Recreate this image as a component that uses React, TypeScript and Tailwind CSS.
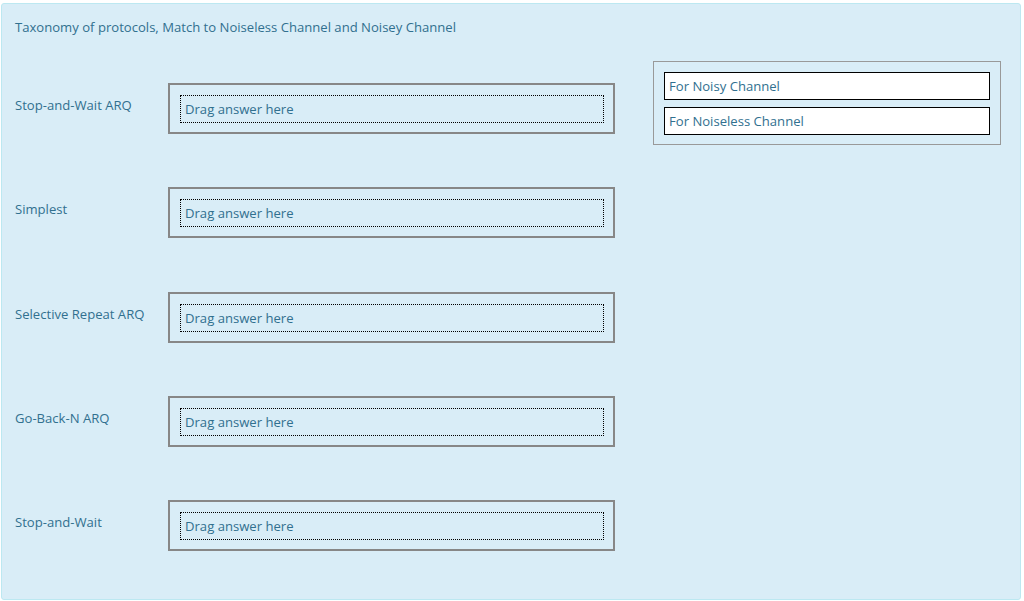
import React from 'react';

const protocols = [
  'Stop-and-Wait ARQ',
  'Simplest',
  'Selective Repeat ARQ',
  'Go-Back-N ARQ',
  'Stop-and-Wait',
];

const answers = ['For Noisy Channel', 'For Noiseless Channel'];

const DropZone: React.FC = () => (
  <div className="w-[447px] h-[51px] border-2 border-[#878787] pl-[10px] pr-[9px] pt-[10px]">
    <div className="h-[28px] border border-dotted border-black pl-[4px] flex items-center">
      <span className="leading-[18px]">Drag answer here</span>
    </div>
  </div>
);

export default function App() {
  return (
    <div className="w-[1024px] h-[601px] bg-white pt-[3px] pl-[1px] pr-[3px] font-['Open_Sans',sans-serif] text-[13.1px] text-[#31708f]">
      <div className="h-[597px] bg-[#d9edf7] border border-[#bce8f1] rounded-[3px] pl-[13px] pr-[19px] pt-[14px]">
        <div className="leading-[18px]">
          Taxonomy of protocols, Match to Noiseless Channel and Noisey Channel
        </div>

        <div className="flex items-start justify-between mt-[25px]">
          {/* question rows */}
          <div className="flex flex-col gap-[53.25px] pt-[22px]">
            {protocols.map((label, i) => (
              <div key={i} className="flex items-start">
                <div className="w-[153px] mt-[13px] leading-[18px]">{label}</div>
                <DropZone />
              </div>
            ))}
          </div>

          {/* answer pool */}
          <div className="w-[348px] border border-[#999999] px-[10px] pt-[10px] pb-[9px] flex flex-col gap-[7px]">
            {answers.map((a) => (
              <div
                key={a}
                className="h-[28px] bg-white border border-black pl-[4px] flex items-center leading-[18px]"
              >
                {a}
              </div>
            ))}
          </div>
        </div>
      </div>
    </div>
  );
}
